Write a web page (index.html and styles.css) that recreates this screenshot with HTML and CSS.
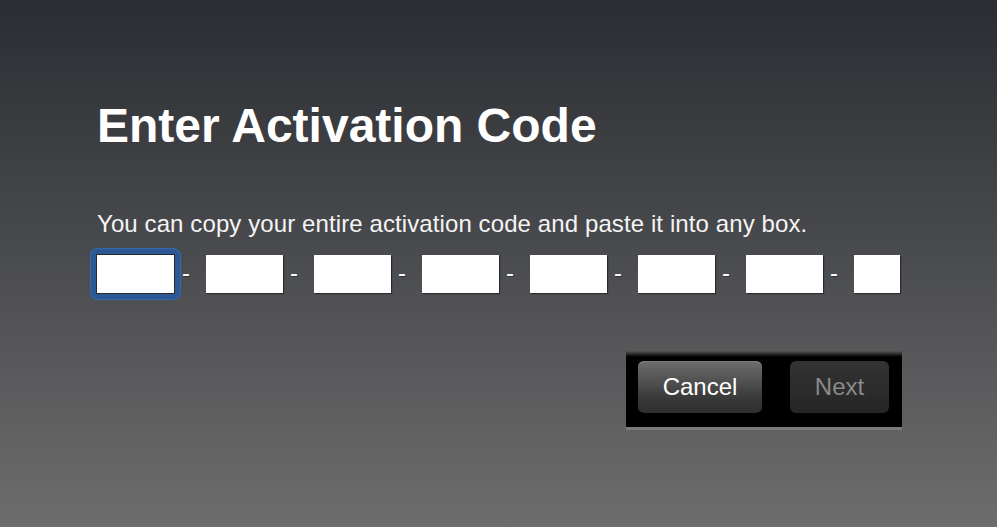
FILE: index.html
```html
<!DOCTYPE html>
<html lang="en">
<head>
<meta charset="utf-8">
<title>Enter Activation Code</title>
<link rel="stylesheet" href="styles.css">
</head>
<body>
<main class="page">
  <div class="content">
    <h1 class="title">Enter Activation Code</h1>
    <p class="hint">You can copy your entire activation code and paste it into any box.</p>
    <div class="code-row">
      <span class="field focused"><input class="code-box" type="text" maxlength="4"></span><span class="dash">-</span>
      <span class="field"><input class="code-box" type="text" maxlength="4"></span><span class="dash">-</span>
      <span class="field"><input class="code-box" type="text" maxlength="4"></span><span class="dash">-</span>
      <span class="field"><input class="code-box" type="text" maxlength="4"></span><span class="dash">-</span>
      <span class="field"><input class="code-box" type="text" maxlength="4"></span><span class="dash">-</span>
      <span class="field"><input class="code-box" type="text" maxlength="4"></span><span class="dash">-</span>
      <span class="field"><input class="code-box" type="text" maxlength="4"></span><span class="dash">-</span>
      <span class="field"><input class="code-box short" type="text" maxlength="2"></span>
    </div>
    <div class="button-panel">
      <button class="btn btn-cancel" type="button">Cancel</button>
      <button class="btn btn-next" type="button" disabled>Next</button>
    </div>
  </div>
</main>
</body>
</html>
```

FILE: styles.css
```css
html, body {
  margin: 0;
  padding: 0;
  height: 100%;
}

body {
  font-family: "Liberation Sans", Arial, Helvetica, sans-serif;
  color: #ffffff;
}

.page {
  box-sizing: border-box;
  width: 997px;
  height: 527px;
  overflow: hidden;
  padding-left: 97px;
  background: linear-gradient(to bottom, #2a2d32 0%, #4b4c4f 50%, #6d6d6d 100%);
}

.content {
  width: 805px;
  display: flex;
  flex-direction: column;
}

.title {
  margin: 0;
  padding-top: 102px;
  font-size: 48px;
  line-height: 48px;
  font-weight: bold;
  color: #ffffff;
}

.hint {
  margin: 62px 0 0;
  font-size: 24px;
  line-height: 24px;
  letter-spacing: 0.1px;
  color: #f4f4f4;
}

.code-row {
  margin-top: 19px;
  display: flex;
  align-items: center;
  height: 38px;
}

.field {
  display: flex;
}

.field.focused {
  margin: -7px;
  padding: 7px;
  border-radius: 8px;
  background: #2c5996;
  box-shadow: inset 0 0 0 1px #3a68a6;
}

.code-box {
  box-sizing: border-box;
  width: 77px;
  height: 38px;
  margin: 0;
  padding: 0 6px;
  border: 0;
  background: #ffffff;
  font-family: inherit;
  font-size: 22px;
  box-shadow: 1px 1px 1px rgba(0, 0, 0, 0.45);
  outline: none;
}

.focused .code-box {
  box-shadow: 0 0 0 1px #2a2a2a;
}

.code-box.short {
  width: 46px;
}

.dash {
  width: 8px;
  margin: 0 16px 0 7px;
  padding-bottom: 2px;
  font-size: 24px;
  line-height: 24px;
  color: #ffffff;
  text-shadow: 1px 1px 0 rgba(0, 0, 0, 0.35);
}

.focused + .dash {
  margin-left: 8px;
}

.button-panel {
  margin-top: 58px;
  align-self: flex-end;
  box-sizing: border-box;
  width: 276px;
  height: 79px;
  padding: 10px 13px 0 12px;
  display: flex;
  justify-content: space-between;
  align-items: flex-start;
  background: linear-gradient(to bottom, #575757 0px, #1a1a1a 4px, #000000 6px);
  border-bottom: 3px solid #7a7a7a;
}

.btn {
  height: 52px;
  border: 0;
  border-radius: 6px;
  font-family: inherit;
  font-size: 24px;
  line-height: 52px;
  padding: 0;
  cursor: pointer;
}

.btn-cancel {
  width: 124px;
  color: #ffffff;
  background: linear-gradient(to bottom, #6d6d6d 0%, #505050 40%, #3a3a3a 70%, #2e2e2e 100%);
  box-shadow: inset 0 1px 0 #7d7d7d;
}

.btn-next {
  width: 99px;
  color: #8a8a8a;
  background: linear-gradient(to bottom, #333333 0%, #2b2b2b 60%, #252525 100%);
  cursor: default;
}
```
